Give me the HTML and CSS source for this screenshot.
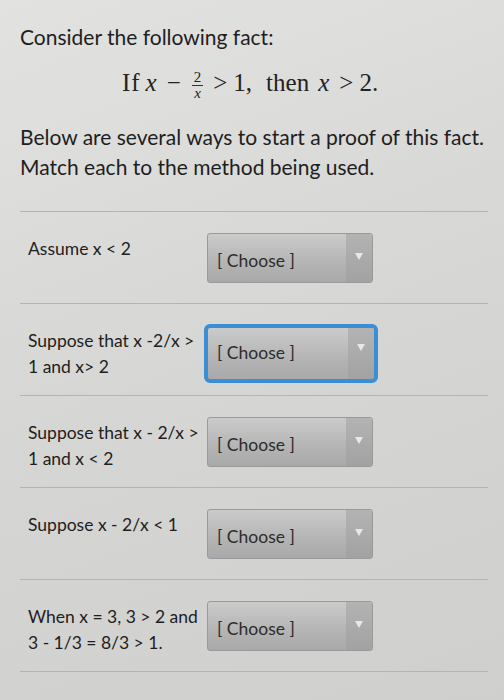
FILE: index.html
```html
<!DOCTYPE html>
<html lang="en">
<head>
    <meta charset="UTF-8">
    <meta name="viewport" content="width=device-width, initial-scale=1.0">
    <title>Matching question</title>
    <link rel="stylesheet" href="styles.css">
</head>
<body>

    <div class="question">
        <p class="intro">Consider the following fact:</p>

        <!-- The fact, set like a display formula -->
        <p class="formula">
            <span class="word">If</span><i class="var">x</i><span class="op">&minus;</span><span class="frac"><span class="num">2</span><span class="den"><i>x</i></span></span><span class="op">&gt;</span><span>1,</span><span class="word then">then</span><i class="var">x</i><span class="op">&gt;</span><span>2.</span>
        </p>

        <p class="intro">Below are several ways to start a proof of this fact. Match each to the method being used.</p>

        <div class="answers">
            <div class="answer">
                <div class="label">Assume x &lt; 2</div>
                <div class="choose"><span>[ Choose ]</span><span class="arrow"></span></div>
            </div>
            <div class="answer">
                <div class="label">Suppose that x -2/x &gt; 1 and x&gt; 2</div>
                <div class="choose focused"><span>[ Choose ]</span><span class="arrow"></span></div>
            </div>
            <div class="answer">
                <div class="label">Suppose that x - 2/x &gt; 1 and x &lt; 2</div>
                <div class="choose"><span>[ Choose ]</span><span class="arrow"></span></div>
            </div>
            <div class="answer">
                <div class="label">Suppose x - 2/x &lt; 1</div>
                <div class="choose"><span>[ Choose ]</span><span class="arrow"></span></div>
            </div>
            <div class="answer">
                <div class="label">When x = 3, 3 &gt; 2 and 3 - 1/3 = 8/3 &gt; 1.</div>
                <div class="choose"><span>[ Choose ]</span><span class="arrow"></span></div>
            </div>
        </div>
    </div>

</body>
</html>
```

FILE: styles.css
```css
body {
    margin: 0;
    padding: 0;
    font-family: Lato, "Open Sans", sans-serif;
    color: #1e1e1e;
    background: linear-gradient(160deg, #e2e2e0 0%, #d6d6d4 50%, #cfcfcd 100%);
    min-height: 700px;
}

.question {
    padding: 22px 16px 0 20px;
}

.intro {
    font-size: 21px;
    line-height: 30px;
    margin: 0;
}

/* Display formula */
.formula {
    font-family: "Liberation Serif", "DejaVu Serif", serif;
    font-size: 25px;
    line-height: 30px;
    height: 30px;
    text-align: center;
    margin: 16px 0 24px 0;
    padding-right: 8px;
    color: #222;
}

.formula .word {
    margin-right: 5px;
    letter-spacing: 1px;
}

.formula .then {
    margin-left: 14px;
    margin-right: 9px;
    letter-spacing: 0;
}

.formula .var {
    font-style: italic;
}

.formula .op {
    margin: 0 6px 0 10px;
}

.frac {
    display: inline-flex;
    flex-direction: column;
    align-items: center;
    vertical-align: middle;
    font-size: 15px;
    line-height: 15px;
    margin: 0 0 0 5px;
}

.frac .num {
    border-bottom: 1px solid #333;
    padding: 0 2px;
}

/* List of statements with dropdowns */
.answers {
    margin-top: 29px;
    border-top: 1px solid #b4b4b2;
}

.answer {
    display: flex;
    align-items: flex-start;
    height: 92px;
    box-sizing: border-box;
    padding: 21px 0 0 8px;
    border-bottom: 1px solid #b4b4b2;
}

.label {
    width: 174px;
    font-size: 17.5px;
    line-height: 26px;
    padding-top: 3px;
    margin-right: 5px;
}

.choose {
    display: flex;
    align-items: stretch;
    width: 166px;
    height: 50px;
    box-sizing: border-box;
    border: 1px solid #9a9a9a;
    border-radius: 3px;
    background: linear-gradient(180deg, #cbcbcb 0%, #b4b4b4 60%, #a9a9a9 100%);
    font-size: 17.5px;
    color: #2c2c2c;
}

.choose span:first-child {
    flex: 1;
    padding: 16px 0 0 9px;
}

.choose .arrow {
    width: 26px;
    position: relative;
    background: linear-gradient(180deg, #b3b3b3 0%, #a2a2a2 100%);
    border-radius: 0 3px 3px 0;
}

.choose .arrow::after {
    content: "";
    position: absolute;
    top: 19px;
    left: 9px;
    border-left: 4px solid transparent;
    border-right: 4px solid transparent;
    border-top: 7px solid #e8e8e8;
}

/* Focused dropdown has a blue ring */
.choose.focused {
    width: 174px;
    height: 59px;
    margin-left: -3px;
    margin-top: -1px;
    border: 4px solid #3a8fd4;
    border-radius: 6px;
}

.choose.focused span:first-child {
    padding-top: 14px;
}

.choose.focused .arrow::after {
    top: 16px;
}
```
